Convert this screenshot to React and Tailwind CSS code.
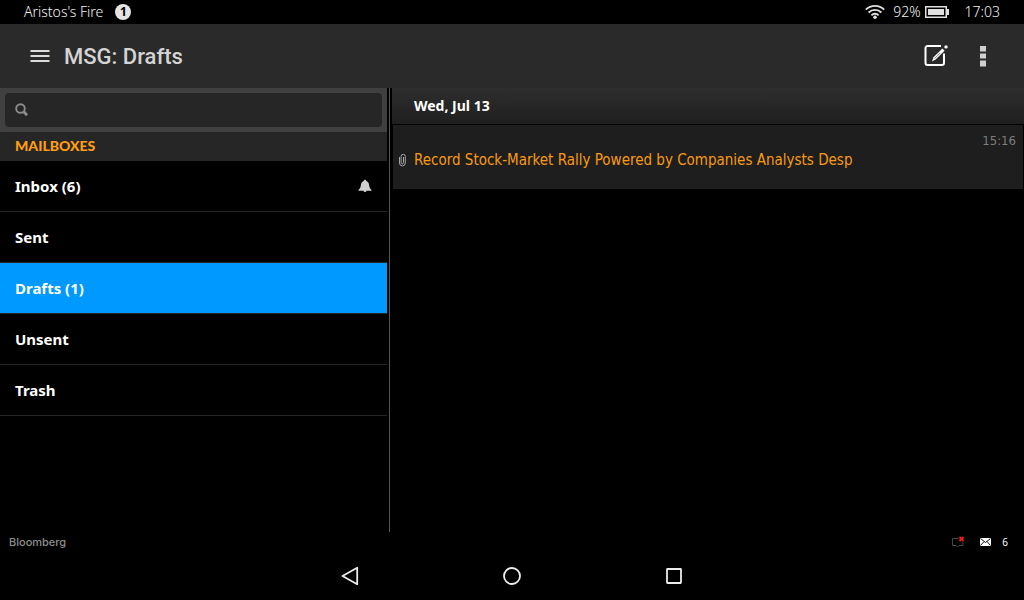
import React from 'react';

const mailboxes = [
  { name: 'Inbox', count: 6, alert: true },
  { name: 'Sent' },
  { name: 'Drafts', count: 1 },
  { name: 'Unsent' },
  { name: 'Trash' },
];

const StatusBar = () => (
  <div className="flex h-6 items-center bg-black px-6 font-['Noto_Sans',sans-serif] text-sm font-light text-[#f4f4f4]">
    <span>Aristos's Fire</span>
    <span className="ml-3 flex h-4 w-4 items-center justify-center rounded-full bg-[#e4e4e4] text-xs font-bold text-black">
      1
    </span>
    <svg className="ml-auto h-4 w-5" viewBox="0 0 20 16" fill="none" stroke="#e0e0e0" strokeWidth="1.8">
      <path d="M.8 5.600a13 13 0 0 1 18.400 0M3.600 8.500a9 9 0 0 1 12.800 0M6.400 11.300a5 5 0 0 1 7.200 0" />
      <circle cx="10" cy="13.200" r="1.800" fill="#e0e0e0" stroke="none" />
    </svg>
    <span className="ml-2">92%</span>
    <svg className="ml-1 h-3 w-6" viewBox="0 0 24 12">
      <rect x="0.75" y="0.75" width="20.5" height="10.5" fill="none" stroke="#e0e0e0" strokeWidth="1.5" />
      <rect x="3" y="3" width="16" height="6" fill="#e0e0e0" />
      <rect x="22" y="3" width="2" height="6" fill="#e0e0e0" />
    </svg>
    <span className="ml-4">17:03</span>
  </div>
);

const Header = () => (
  <header className="flex h-16 items-center bg-[#2a2a2a] pl-[30px] pr-[38px]">
    <button type="button" aria-label="Menu">
      <svg className="h-4 w-5" viewBox="0 0 20 16" fill="#dcdcdc">
        <path d="M0.5 2h19v2h-19zM0.5 7h19v2h-19zM0.5 12h19v2h-19z" />
      </svg>
    </button>
    <h1 className="ml-[14px] font-[Roboto,sans-serif] text-[22px] font-medium text-[#d4d4d4]">MSG: Drafts</h1>
    <button type="button" aria-label="Compose" className="ml-auto">
      <svg className="h-6 w-6" viewBox="0 0 24 24" fill="none">
        <path
          d="M17 2H3.500A2 2 0 0 0 1.500 4V19A2 2 0 0 0 3.500 21H18A2 2 0 0 0 20 19V9.500"
          stroke="#fff"
          strokeWidth="2"
        />
        <path d="M8 17.500l1.500-4.300L18.400 4.500l2.200 2.200-9 8.800z" fill="#fff" />
        <path d="M10.600 14.600l5.600-5.600" stroke="#2a2a2a" strokeWidth="0.6" />
        <circle cx="22" cy="2.900" r="1.700" fill="#fff" />
      </svg>
    </button>
    <button type="button" aria-label="More options" className="ml-8">
      <svg className="h-6 w-[6px]" viewBox="0 0 6 24" fill="#cfcfcf">
        <path d="M0 2h6v5.500H0zM0 9.500h6v5H0zM0 16.500h6v6H0z" />
      </svg>
    </button>
  </header>
);

const Sidebar = () => (
  <aside className="w-[390px] shrink-0 border-r border-[#555] pr-[2px]">
    <div className="bg-[#404040] p-[5px]">
      <label className="flex h-[34px] items-center rounded bg-[#262626] px-[10px]">
        <svg className="h-[14px] w-[14px]" viewBox="0 0 14 14" fill="none" stroke="#8c8c8c">
          <circle cx="5.500" cy="5.500" r="4.300" strokeWidth="1.900" />
          <path d="M8.800 8.800l3.200 3.500" strokeWidth="2.800" />
        </svg>
        <input
          type="search"
          aria-label="Search mailboxes"
          className="ml-2 min-w-0 flex-1 bg-transparent text-sm text-white outline-none"
        />
      </label>
    </div>
    <h2 className="h-[29px] bg-[#262626] px-[15px] font-[Lato,sans-serif] text-sm font-black leading-7 text-[#ff9f0f]">
      MAILBOXES
    </h2>
    <nav className="font-['Noto_Sans',sans-serif] text-[15px] font-bold text-white">
      {mailboxes.map(({ name, count, alert }) => (
        <a
          key={name}
          href={`#${name.toLowerCase()}`}
          className={`flex h-[51px] items-center justify-between border-b border-[#262626] px-[15px] ${
            name === 'Drafts' ? 'bg-[#0099ff]' : ''
          }`}
        >
          {count ? `${name} (${count})` : name}
          {alert && (
            <svg className="h-[14px] w-[14px]" viewBox="0 0 14 14" fill="#cfcfcf">
              <path d="M7 .8c.8 0 1.200.5 1.300 1.100C10.300 2.600 11 4.200 11.200 6.500c.2 2 .9 3.300 2.300 4.200v1.100H.5v-1.100c1.400-.9 2.100-2.200 2.300-4.200C3 4.200 3.700 2.600 5.700 1.900 5.800 1.300 6.200.8 7 .8zM5.500 11.800h3c-.2.800-.8 1.200-1.500 1.200s-1.300-.4-1.500-1.200z" />
            </svg>
          )}
        </a>
      ))}
    </nav>
  </aside>
);

const MessageList = () => (
  <main className="min-w-0 flex-1 pl-[2px]">
    <h2 className="h-9 bg-linear-to-b from-[#2e2e2e] to-[#1f1f1f] px-[22px] font-['Noto_Sans',sans-serif] text-sm font-bold leading-9 text-white">
      Wed, Jul 13
    </h2>
    <a
      href="#message"
      className="mx-px mt-px flex h-16 bg-[#1e1e1e] pl-[5px] pr-[7px] font-['DejaVu_Sans_Condensed','DejaVu_Sans',sans-serif] text-[#f79a14]"
    >
      <svg className="mt-7 h-[14px] w-[10px]" viewBox="0 0 10 14" fill="none" stroke="#a5a5a5">
        <path
          d="M1.500 4v6a2.900 2.900 0 0 0 5.800 0V3.400a2.100 2.100 0 0 0-4.200 0v6.200a1.200 1.200 0 0 0 2.400 0V4"
          strokeWidth="1"
        />
      </svg>
      <span className="ml-[6px] min-w-0 flex-1 truncate text-[15px] leading-[70px]">
        Record Stock-Market Rally Powered by Companies Analysts Desp
      </span>
      <time className="text-[13px] leading-8 text-[#7d7d7d]">15:16</time>
    </a>
  </main>
);

const Footer = () => (
  <footer className="flex h-5 items-center pl-[9px] pr-4 text-[11px]">
    <span className="font-[Inter,sans-serif] font-medium text-[#8e8e8e]">Bloomberg</span>
    <svg className="ml-auto h-3 w-3" viewBox="0 0 12 12" fill="none">
      <path d="M6.500 2.500h-6v7h3.500l1.500 1.500 1.500-1.500h4V6" stroke="#484848" />
      <path d="M7.500 1l4 4M11.500 1l-4 4" stroke="#f01c1c" strokeWidth="2" />
    </svg>
    <svg className="ml-4 h-2 w-[11px]" viewBox="0 0 11 8">
      <path d="M0 0h11v8H0z" fill="#fff" />
      <path d="M.5.5l5 4 5-4M.5 7.500l3.500-4M10.500 7.500l-3.500-4" fill="none" stroke="#111" />
    </svg>
    <span className="ml-[11px] font-['Noto_Sans',sans-serif] text-[10px] text-white">6</span>
  </footer>
);

const SystemNav = () => (
  <nav className="flex h-12 items-center justify-center gap-[138px]">
    <button type="button" aria-label="Back">
      <svg className="h-6 w-6" viewBox="0 0 24 24" fill="none" stroke="#ececec" strokeWidth="1.800" strokeLinejoin="round">
        <path d="M19.200 3.800v16.400L4.500 12z" />
      </svg>
    </button>
    <button type="button" aria-label="Home">
      <svg className="h-6 w-6" viewBox="0 0 24 24" fill="none" stroke="#ececec" strokeWidth="1.800">
        <circle cx="12" cy="12" r="8" />
      </svg>
    </button>
    <button type="button" aria-label="Recent apps">
      <svg className="h-6 w-6" viewBox="0 0 24 24" fill="none" stroke="#ececec" strokeWidth="1.800">
        <rect x="5" y="5" width="14" height="14" rx="0.500" />
      </svg>
    </button>
  </nav>
);

const App = () => (
  <div className="flex min-h-screen flex-col bg-black">
    <StatusBar />
    <Header />
    <div className="flex flex-1">
      <Sidebar />
      <MessageList />
    </div>
    <Footer />
    <SystemNav />
  </div>
);

export default App;
